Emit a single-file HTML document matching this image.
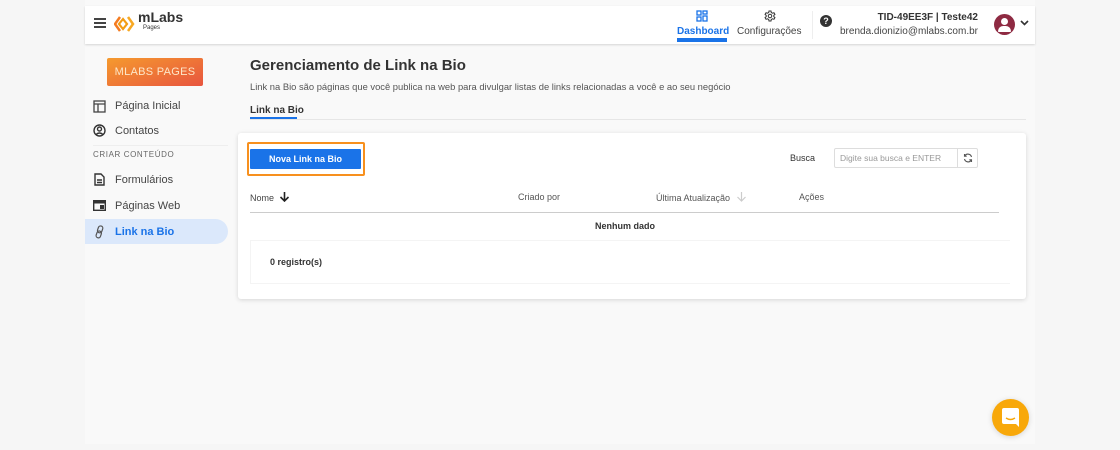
<!DOCTYPE html>
<html><head><meta charset="utf-8"><style>
*{box-sizing:border-box;margin:0;padding:0}
body{width:1120px;height:450px;background:#f6f6f6;font-family:"Liberation Sans",sans-serif;color:#333;position:relative;overflow:hidden}
.abs{position:absolute}
.frame{left:85px;top:0;width:950px;height:444px;background:#f9f9f9}
.hdr{left:85px;top:6px;width:950px;height:38px;background:#fff;box-shadow:0 1px 2px rgba(0,0,0,.15)}
.t{position:absolute;white-space:nowrap}
</style></head><body>
<div class="abs frame"></div>
<div class="abs hdr">
  <div class="abs" style="left:9px;top:12px;width:12px;height:2px;background:#444;box-shadow:0 4px 0 #444,0 8px 0 #444"></div>
  <svg class="abs" style="left:29px;top:9px" width="22" height="18" viewBox="0 0 22 18"><path d="M6 2 L1 9 L6 16" fill="none" stroke="#f47b20" stroke-width="2.5"/><path d="M9 4 L5 9 L9 14 L13 9 Z" fill="none" stroke="#f39c12" stroke-width="2.2"/><path d="M14 2 L19 9 L14 16" fill="none" stroke="#f7a823" stroke-width="2.5"/></svg>
  <div class="t" style="left:53px;top:3px;font-size:14px;font-weight:bold;color:#333">mLabs</div>
  <div class="t" style="left:58px;top:19px;font-size:6px;color:#333">Pages</div>
  <svg class="abs" style="left:611px;top:4px" width="12" height="12" viewBox="0 0 12 12" fill="none" stroke="#1a73e8" stroke-width="1.3"><rect x="1" y="1" width="4" height="4"/><rect x="7" y="1" width="4" height="3"/><rect x="1" y="7" width="4" height="4"/><rect x="7" y="6" width="4" height="5"/></svg>
  <div class="t" style="left:592px;top:20px;font-size:10px;font-weight:bold;color:#1a73e8">Dashboard</div>
  <div class="abs" style="left:592px;top:32px;width:50px;height:4px;background:#1a73e8"></div>
  <svg class="abs" style="left:679px;top:4px" width="12" height="12" viewBox="0 0 24 24" fill="none" stroke="#333" stroke-width="2"><circle cx="12" cy="12" r="3.5"/><path d="M10 2h4l.6 3 2.4 1.4 2.9-1 2 3.4-2.3 2v2.4l2.3 2-2 3.4-2.9-1-2.4 1.4-.6 3h-4l-.6-3-2.4-1.4-2.9 1-2-3.4 2.3-2V10.8l-2.3-2 2-3.4 2.9 1L9.4 5z"/></svg>
  <div class="t" style="left:652px;top:20px;font-size:10px;color:#444">Configurações</div>
  <div class="abs" style="left:727px;top:5px;width:1px;height:28px;background:#eee"></div>
  <div class="abs" style="left:735px;top:9px;width:12px;height:12px;border-radius:50%;background:#333;color:#fff;font-size:9px;font-weight:bold;text-align:center;line-height:12px">?</div>
  <div class="t" style="right:57px;top:6px;font-size:10px;font-weight:bold;color:#333">TID-49EE3F | Teste42</div>
  <div class="t" style="right:57px;top:20px;font-size:10px;color:#444">brenda.dionizio@mlabs.com.br</div>
  <div class="abs" style="left:909px;top:8px;width:21px;height:21px;border-radius:50%;background:#8e2a42;overflow:hidden">
    <div class="abs" style="left:7px;top:4px;width:7px;height:7px;border-radius:50%;background:#fff"></div>
    <div class="abs" style="left:4px;top:12px;width:13px;height:6px;border-radius:6px 6px 1px 1px;background:#fff"></div>
  </div>
  <svg class="abs" style="left:935px;top:14px" width="9" height="6" viewBox="0 0 9 6"><path d="M1 1L4.5 4.5L8 1" fill="none" stroke="#333" stroke-width="1.6"/></svg>
</div>
<!-- sidebar -->
<div class="abs" style="left:107px;top:58px;width:96px;height:28px;border-radius:2px;background:linear-gradient(160deg,#f59a2e,#e8553f);color:#fde6c8;font-size:11px;text-align:center;line-height:28px;letter-spacing:.3px">MLABS PAGES</div>
<svg class="abs" style="left:93px;top:100px" width="13" height="13" viewBox="0 0 13 13" fill="none" stroke="#444" stroke-width="1.3"><rect x="1" y="1" width="11" height="11"/><path d="M1 4H12M5 4V12"/></svg>
<div class="t" style="left:115px;top:100px;font-size:11px;color:#444">Página Inicial</div>
<svg class="abs" style="left:93px;top:124px" width="13" height="13" viewBox="0 0 13 13" fill="none" stroke="#333" stroke-width="1.4"><circle cx="6.5" cy="6.5" r="5.5"/><circle cx="6.5" cy="5" r="2"/><path d="M3 10.5Q6.5 7.5 10 10.5"/></svg>
<div class="t" style="left:115px;top:125px;font-size:11px;color:#444">Contatos</div>
<div class="abs" style="left:93px;top:145px;width:135px;height:1px;background:#eee"></div>
<div class="t" style="left:93px;top:150px;font-size:8px;color:#666;letter-spacing:.6px">CRIAR CONTEÚDO</div>
<svg class="abs" style="left:94px;top:173px" width="11" height="13" viewBox="0 0 11 13" fill="none" stroke="#333" stroke-width="1.4"><path d="M1 1H7L10 4V12H1Z"/><path d="M3 7H8M3 9.5H8"/></svg>
<div class="t" style="left:115px;top:174px;font-size:11px;color:#444">Formulários</div>
<svg class="abs" style="left:93px;top:200px" width="13" height="11" viewBox="0 0 13 11"><rect x="0.7" y="0.7" width="11.6" height="9.6" fill="none" stroke="#333" stroke-width="1.4"/><rect x="1" y="1" width="11" height="2.5" fill="#333"/><rect x="7" y="5" width="4" height="4" fill="#333"/></svg>
<div class="t" style="left:115px;top:200px;font-size:11px;color:#444">Páginas Web</div>
<div class="abs" style="left:85px;top:219px;width:143px;height:25px;background:#dbe8fb;border-radius:0 13px 13px 0"></div>
<svg class="abs" style="left:94px;top:225px" width="11" height="14" viewBox="0 0 11 14" fill="none" stroke="#555" stroke-width="1.2"><rect x="4" y="0.8" width="4.5" height="7" rx="2.2" transform="rotate(20 6 4)"/><rect x="2.5" y="6" width="4.5" height="7" rx="2.2" transform="rotate(20 5 9.5)"/></svg>
<div class="t" style="left:115px;top:226px;font-size:11px;font-weight:bold;color:#1a73e8">Link na Bio</div>
<!-- main -->
<div class="t" style="left:250px;top:57px;font-size:15px;font-weight:bold;color:#333">Gerenciamento de Link na Bio</div>
<div class="t" style="left:250px;top:81px;font-size:9.4px;color:#555">Link na Bio são páginas que você publica na web para divulgar listas de links relacionadas a você e ao seu negócio</div>
<div class="t" style="left:250px;top:105px;font-size:10px;font-weight:bold;color:#333">Link na Bio</div>
<div class="abs" style="left:250px;top:117px;width:47px;height:2px;background:#1a73e8"></div>
<div class="abs" style="left:250px;top:119px;width:776px;height:1px;background:#e6e6e6"></div>
<div class="abs" style="left:238px;top:133px;width:788px;height:166px;background:#fff;border-radius:3px;box-shadow:0 1px 5px rgba(0,0,0,.15)"></div>
<div class="abs" style="left:247px;top:142px;width:118px;height:34px;border:2px solid #f7901e;border-radius:2px"></div>
<div class="abs" style="left:250px;top:149px;width:111px;height:20px;background:#1a73e8;border-radius:1px;color:#fff;font-size:9px;font-weight:bold;text-align:center;line-height:20px">Nova Link na Bio</div>
<div class="t" style="left:790px;top:153px;font-size:9px;color:#333">Busca</div>
<div class="abs" style="left:834px;top:148px;width:144px;height:20px;border:1px solid #ddd;border-radius:2px"></div>
<div class="abs" style="left:957px;top:148px;width:1px;height:20px;background:#ddd"></div>
<div class="t" style="left:840px;top:153px;font-size:8.5px;color:#999">Digite sua busca e ENTER</div>
<svg class="abs" style="left:963px;top:153px" width="10" height="10" viewBox="0 0 10 10" fill="none" stroke="#555" stroke-width="1.1"><path d="M8.5 4A3.7 3.7 0 0 0 1.8 2.8M1.5 6A3.7 3.7 0 0 0 8.2 7.2"/><path d="M1.5 1V3.2H3.7M8.5 9V6.8H6.3"/></svg>
<div class="t" style="left:250px;top:193px;font-size:9px;color:#444">Nome</div>
<svg class="abs" style="left:279px;top:191px" width="11" height="11" viewBox="0 0 11 11" fill="none" stroke="#222" stroke-width="1.6"><path d="M5.5 1V10M1.5 6L5.5 10L9.5 6"/></svg>
<div class="t" style="left:518px;top:192px;font-size:9px;color:#555">Criado por</div>
<div class="t" style="left:656px;top:193px;font-size:9px;color:#555">Última Atualização</div>
<svg class="abs" style="left:736px;top:191px" width="11" height="11" viewBox="0 0 11 11" fill="none" stroke="#ccc" stroke-width="1.2"><path d="M5.5 1V10M1.5 6L5.5 10L9.5 6"/></svg>
<div class="t" style="left:799px;top:192px;font-size:9px;color:#555">Ações</div>
<div class="abs" style="left:250px;top:212px;width:749px;height:1px;background:#ccc"></div>
<div class="t" style="left:595px;top:221px;font-size:9px;font-weight:bold;color:#333">Nenhum dado</div>
<div class="abs" style="left:250px;top:240px;width:760px;height:44px;border:1px solid #f4f4f4;border-right:none"></div>
<div class="t" style="left:270px;top:257px;font-size:9px;font-weight:bold;color:#333">0 registro(s)</div>
<!-- chat -->
<div class="abs" style="left:992px;top:399px;width:37px;height:37px;border-radius:50%;background:#f8a80a;box-shadow:0 1px 6px rgba(0,0,0,.15)">
  <svg class="abs" style="left:10px;top:9px" width="17" height="19" viewBox="0 0 17 19"><path d="M2 0H15A2 2 0 0 1 17 2V19L14 16H2A2 2 0 0 1 0 14V2A2 2 0 0 1 2 0Z" fill="#fff"/><path d="M4 10Q8.5 13 13 10" fill="none" stroke="#f8a80a" stroke-width="1.4"/></svg>
</div>
</body></html>
